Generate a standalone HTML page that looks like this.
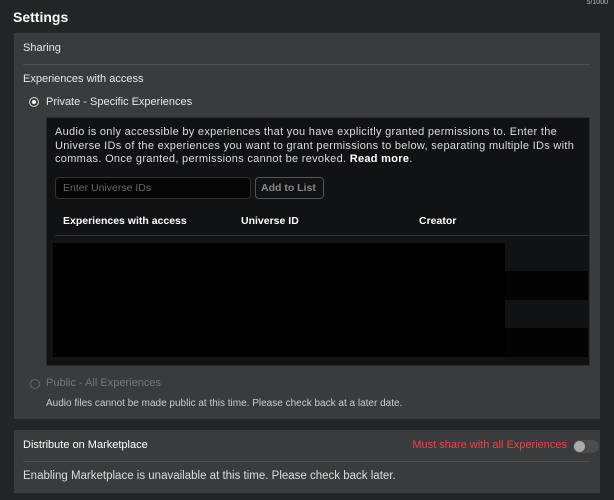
<!DOCTYPE html><html><head><style>
body{margin:0;width:614px;height:500px;background:#232527;font-family:"Liberation Sans",sans-serif;color:#e8e8e8;position:relative;overflow:hidden}
.a{position:absolute;white-space:nowrap}
</style></head><body>
<div class="a" style="right:6px;top:-1px;font-size:7px;color:#bbb">5/1000</div>
<div class="a" style="left:13px;top:9px;font-size:14px;font-weight:bold;color:#fff">Settings</div>
<div class="a" style="left:14px;top:33px;width:586px;height:386px;background:#393b3d"></div>
<div class="a" style="left:23px;top:42px;font-size:11px">Sharing</div>
<div class="a" style="left:23px;top:64px;width:567px;height:1px;background:#4c4e50"></div>
<div class="a" style="left:23px;top:73px;font-size:11px">Experiences with access</div>
<div class="a" style="left:29px;top:97px;width:8px;height:8px;border:1px solid #ccc;border-radius:50%;background:#fff;box-shadow:inset 0 0 0 2px #393b3d"></div>
<div class="a" style="left:46px;top:96px;font-size:11px">Private - Specific Experiences</div>
<div class="a" style="left:46px;top:117px;width:544px;height:249px;background:#111214;border:1px solid #2a2b2d;box-sizing:border-box"></div>
<div class="a" style="left:55px;top:126px;font-size:11px;line-height:13.5px;color:#ddd;letter-spacing:0.3px">Audio is only accessible by experiences that you have explicitly granted permissions to. Enter the<br>Universe IDs of the experiences you want to grant permissions to below, separating multiple IDs with<br>commas. Once granted, permissions cannot be revoked. <b style="color:#fff">Read more</b>.</div>
<div class="a" style="left:55px;top:177px;width:196px;height:22px;background:#050505;border:1px solid #333;border-radius:4px;box-sizing:border-box;font-size:10.5px;color:#666;padding:4px 7px">Enter Universe IDs</div>
<div class="a" style="left:255px;top:177px;width:69px;height:22px;border:1px solid #555;border-radius:4px;box-sizing:border-box;font-size:10.5px;color:#888;padding:4px 5px;font-weight:bold">Add to List</div>
<div class="a" style="left:63px;top:215px;font-size:10.5px;font-weight:bold;color:#fff">Experiences with access</div>
<div class="a" style="left:241px;top:215px;font-size:10.5px;font-weight:bold;color:#fff">Universe ID</div>
<div class="a" style="left:419px;top:215px;font-size:10.5px;font-weight:bold;color:#fff">Creator</div>
<div class="a" style="left:55px;top:235px;width:533px;height:1px;background:#333"></div>
<div class="a" style="left:53px;top:243px;width:452px;height:114px;background:#000"></div>
<div class="a" style="left:505px;top:271px;width:83px;height:29px;background:#030303"></div>
<div class="a" style="left:505px;top:328px;width:83px;height:29px;background:#030303"></div>
<div class="a" style="left:30px;top:379px;width:8px;height:8px;border:1px solid #666;border-radius:50%"></div>
<div class="a" style="left:46px;top:377px;font-size:11px;color:#777">Public - All Experiences</div>
<div class="a" style="left:46px;top:398px;font-size:10px;color:#ccc">Audio files cannot be made public at this time. Please check back at a later date.</div>
<div class="a" style="left:14px;top:430px;width:586px;height:63px;background:#393b3d"></div>
<div class="a" style="left:23px;top:439px;font-size:11px;color:#fff">Distribute on Marketplace</div>
<div class="a" style="right:47px;top:439px;font-size:11px;color:#f0404a">Must share with all Experiences</div>
<div class="a" style="left:573px;top:440px;width:26px;height:13px;border-radius:7px;background:#4a4c4e"></div>
<div class="a" style="left:574px;top:441px;width:11px;height:11px;border-radius:50%;background:#aaa"></div>
<div class="a" style="left:23px;top:461px;width:567px;height:1px;background:#4c4e50"></div>
<div class="a" style="left:23px;top:470px;font-size:11.5px;color:#ddd">Enabling Marketplace is unavailable at this time. Please check back later.</div>
</body></html>
